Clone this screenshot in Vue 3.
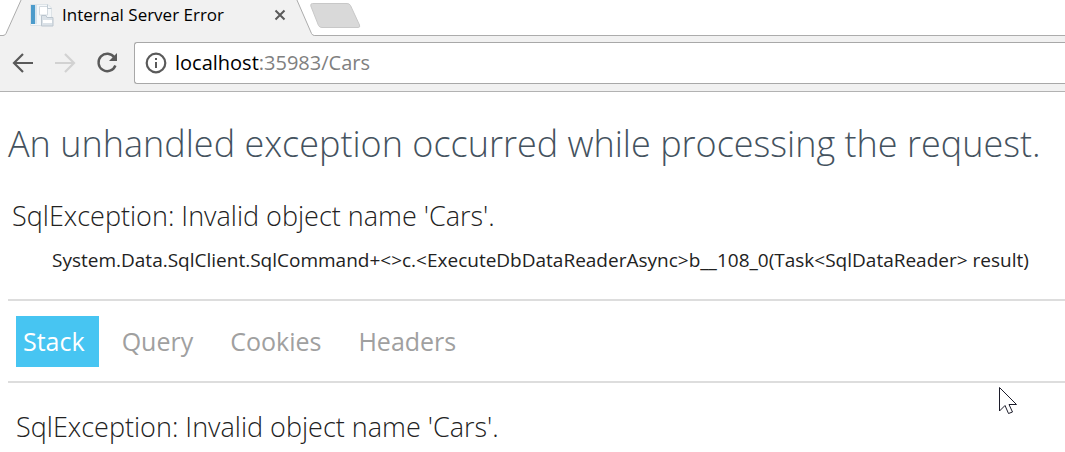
<script setup>
import { ref } from 'vue'

const address = ref(':35983/Cars')
const views = ['Stack', 'Query', 'Cookies', 'Headers']
const current = ref('Stack')
</script>

<template>
  <div class="browser">
    <header>
      <div class="strip">
        <div class="tab">
          <svg class="tab-shape" width="318" height="36" viewBox="0 0 318 36" aria-hidden="true">
            <path d="M0 36V35.5H3Q5 35.5 6 33.5L21.5 -1H296.500L311.500 33.500Q312.500 35.500 314.500 35.500H318V36Z" fill="#f1f1f1" />
            <path d="M0 35.500H3Q5 35.500 6 33.500L21.500 -1M296.500 -1L311.500 33.500Q312.500 35.500 314.500 35.500H318" fill="none" stroke="#acacac" />
          </svg>
          <svg class="favicon" width="24" height="24" viewBox="0 0 24 24" aria-hidden="true">
            <path d="M.5 1.500H18L21.500 5V22.500H.5Z" fill="#f4f7f9" stroke="#dde3e7" />
            <path d="M1 2H5V21H1Z" fill="#4b9bcb" />
            <path d="M5 2H7V21H5Z" fill="#d4e3ed" />
            <path d="M9.500 3.500H17.500V12H9.500Z" fill="#fff" stroke="#d3dae0" />
            <path d="M17.500 1.500V5.500H21.500" fill="none" stroke="#bfcad2" />
            <path d="M11.500 12.500H16L17 14.500H23V23H11.500Z" fill="#dbe2e8" stroke="#bcc6cf" />
            <path d="M13 17H22V20H13Z" fill="#fff" />
          </svg>
          <span class="tab-title">Internal Server Error</span>
          <button class="close" type="button" aria-label="Close tab">
            <svg width="12" height="12" viewBox="0 0 12 12"><path d="M1.500 1.500L10.500 10.500M10.500 1.500L1.500 10.500" fill="none" stroke="#5a5a5a" stroke-width="2" /></svg>
          </button>
        </div>
        <button class="new-tab" type="button" aria-label="New tab">
          <svg width="52" height="26" viewBox="0 0 52 26"><path d="M2.500 .5H37Q39.500 .5 40.500 2.500L49.500 22Q50.500 24.500 48 24.500H12Q9.500 24.500 8.500 22.500L.8 3Q.3 .5 2.500 .5Z" fill="#d9d9d9" stroke="#c8c8c8" /></svg>
        </button>
      </div>
      <div class="toolbar">
        <button class="nav" type="button" aria-label="Back">
          <svg width="22" height="22" viewBox="0 0 22 22"><path d="M21 11H2.500M11 2L2 11L11 20" fill="none" stroke="#5a5a5a" stroke-width="2.200" /></svg>
        </button>
        <button class="nav" type="button" aria-label="Forward" disabled>
          <svg width="22" height="22" viewBox="0 0 22 22"><path d="M1 11H19.500M11 2L20 11L11 20" fill="none" stroke="#d2d2d2" stroke-width="2.200" /></svg>
        </button>
        <button class="nav" type="button" aria-label="Reload">
          <svg width="22" height="22" viewBox="0 0 22 22">
            <path d="M18.400 5.500A8.700 8.700 0 1 0 19.400 13.500" fill="none" stroke="#5a5a5a" stroke-width="2.400" />
            <path d="M21 1V9H13Z" fill="#5a5a5a" />
          </svg>
        </button>
        <div class="omnibox">
          <svg class="info" width="22" height="22" viewBox="0 0 22 22" aria-hidden="true">
            <circle cx="11" cy="11" r="9.300" fill="none" stroke="#5a5a5a" stroke-width="2.200" />
            <path d="M10 6H12V8H10ZM10 10H12V16H10Z" fill="#5a5a5a" />
          </svg>
          <label class="host" for="address">localhost</label>
          <input id="address" v-model="address" type="text" spellcheck="false" />
        </div>
      </div>
    </header>

    <main>
      <h1>An unhandled exception occurred while processing the request.</h1>
      <h2>SqlException: Invalid object name 'Cars'.</h2>
      <p class="location">System.Data.SqlClient.SqlCommand+&lt;&gt;c.&lt;ExecuteDbDataReaderAsync&gt;b__108_0(Task&lt;SqlDataReader&gt; result)</p>
      <nav class="views">
        <button v-for="view in views" :key="view" type="button" :class="{ active: view === current }" @click="current = view">{{ view }}</button>
      </nav>
      <h2 class="detail">SqlException: Invalid object name 'Cars'.</h2>
    </main>

    <svg class="pointer" width="18" height="28" viewBox="0 0 18 28" aria-hidden="true">
      <path d="M.5 .5V24L6 18.500L9.500 26.500L13.500 25L10 17.500H17.500Z" fill="#fff" stroke="#1c1c2a" />
    </svg>
  </div>
</template>

<style>
body {
  background: #fff;
}
</style>

<style scoped>
.browser {
  position: relative;
  min-height: 100vh;
  overflow: hidden;
  font-family: "Open Sans", "Noto Sans", sans-serif;
  color: #222;
}

button {
  padding: 0;
  border: 0;
  background: none;
  font: inherit;
}

svg {
  display: block;
}

.strip {
  display: flex;
  height: 36px;
  background: linear-gradient(#acacac, #acacac) bottom / 100% 1px no-repeat;
}

.tab {
  position: relative;
  display: flex;
  align-items: center;
  box-sizing: border-box;
  width: 310px;
  padding: 0 24px 6px 30px;
}

.tab-shape {
  position: absolute;
  top: 0;
  left: 0;
}

.favicon,
.tab-title,
.close {
  position: relative;
}

.tab-title {
  flex: 1;
  margin-left: 8px;
  font-size: 17px;
  line-height: 24px;
  color: #000;
  white-space: nowrap;
}

.new-tab {
  align-self: flex-start;
  padding-top: 3px;
}

.toolbar {
  display: flex;
  align-items: center;
  gap: 20px;
  box-sizing: border-box;
  height: 56px;
  padding: 0 0 2px 12px;
  border-bottom: 1px solid #b2b2b2;
  background: #f1f1f1;
}

.omnibox {
  display: flex;
  flex: 1;
  align-items: center;
  box-sizing: border-box;
  height: 42px;
  margin-left: -4px;
  padding-left: 10px;
  border: 1px solid #a8a8a8;
  border-right: 0;
  border-radius: 3px 0 0 3px;
  background: #fff;
  font-size: 20px;
}

.host {
  margin-left: 8px;
  color: #000;
}

#address {
  flex: 1;
  min-width: 0;
  padding: 0;
  border: 0;
  outline: 0;
  background: none;
  font: inherit;
  color: #808080;
}

main {
  padding-left: 8px;
}

h1,
h2 {
  margin: 0;
  font-weight: 300;
  white-space: nowrap;
}

h1 {
  padding-top: 24px;
  font-size: 36px;
  line-height: 56px;
  color: #44525e;
}

h2 {
  margin-top: 24px;
  padding-left: 4px;
  font-size: 27px;
  line-height: 40px;
}

.location {
  margin: 10px 0 0;
  padding-left: 44px;
  font-size: 19px;
  line-height: 28px;
  white-space: nowrap;
}

.views {
  display: flex;
  gap: 16px;
  margin-top: 25px;
  padding: 15px 8px 14px;
  border-top: 2px solid #ddd;
  border-bottom: 2px solid #ddd;
}

.views button {
  padding: 0 14px 0 7px;
  font-size: 25px;
  line-height: 51px;
  color: #a0a0a0;
}

.views .active {
  background: #47c5f2;
  color: #fff;
}

.detail {
  padding-left: 8px;
}

.pointer {
  position: absolute;
  top: 387px;
  left: 999px;
}
</style>
